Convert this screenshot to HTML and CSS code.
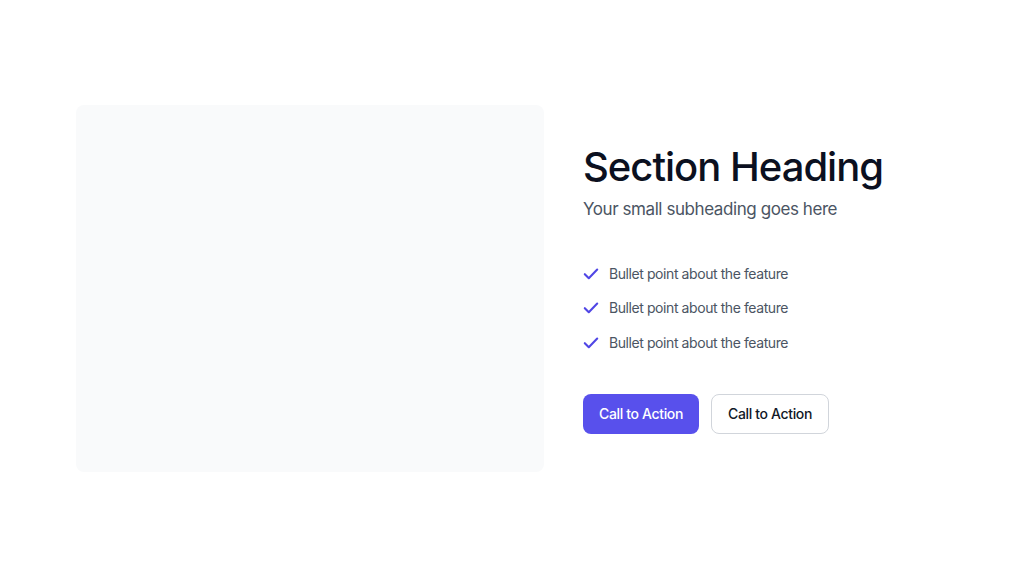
FILE: index.html
```html
<!DOCTYPE html>
<html lang="en">
<head>
<meta charset="utf-8">
<title>Section</title>
<link rel="stylesheet" href="styles.css">
</head>
<body>
<section class="section">
  <div class="media"></div>
  <div class="content">
    <h1 class="heading">Section Heading</h1>
    <p class="subheading">Your small subheading goes here</p>
    <ul class="bullets">
      <li class="bullet"><svg class="check" viewBox="0 0 16 16" fill="none"><path d="M1.8 8.2l4 4 8.4-8.6" stroke="currentColor" stroke-width="2.1" stroke-linecap="round" stroke-linejoin="round"/></svg><span>Bullet point about the feature</span></li>
      <li class="bullet"><svg class="check" viewBox="0 0 16 16" fill="none"><path d="M1.8 8.2l4 4 8.4-8.6" stroke="currentColor" stroke-width="2.1" stroke-linecap="round" stroke-linejoin="round"/></svg><span>Bullet point about the feature</span></li>
      <li class="bullet"><svg class="check" viewBox="0 0 16 16" fill="none"><path d="M1.8 8.2l4 4 8.4-8.6" stroke="currentColor" stroke-width="2.1" stroke-linecap="round" stroke-linejoin="round"/></svg><span>Bullet point about the feature</span></li>
    </ul>
    <div class="actions">
      <a class="btn btn-primary" href="#">Call to Action</a>
      <a class="btn btn-secondary" href="#">Call to Action</a>
    </div>
  </div>
</section>
</body>
</html>
```
FILE: styles.css
```css
* { box-sizing: border-box; }
html, body { margin: 0; padding: 0; background: #ffffff; }
body { font-family: Inter, "Noto Sans", sans-serif; color: #111827; }

.section {
  display: flex;
  align-items: center;
  gap: 39px;
  height: 576px;
  padding-left: 76px;
}

.media {
  flex: none;
  width: 468px;
  height: 367px;
  background: #f9fafb;
  border-radius: 8px;
}

.content {
  display: flex;
  flex-direction: column;
}

.heading {
  margin: 0;
  font-size: 40px;
  line-height: 48px;
  font-weight: 500;
  color: #0b1020;
  letter-spacing: -0.025em;
}

.subheading {
  margin: 4px 0 0;
  font-size: 17px;
  line-height: 28px;
  color: #4b5563;
  letter-spacing: -0.025em;
}

.bullets {
  list-style: none;
  margin: 41px 0 0;
  padding: 0;
  display: flex;
  flex-direction: column;
  gap: 14.5px;
}

.bullet {
  display: flex;
  align-items: center;
  gap: 10px;
  font-size: 14px;
  line-height: 20px;
  color: #4b5563;
  letter-spacing: -0.03em;
}

.check {
  width: 16px;
  height: 16px;
  color: #5046e5;
  flex: none;
}

.actions {
  display: flex;
  gap: 12px;
  margin-top: 41px;
}

.btn {
  display: inline-flex;
  align-items: center;
  justify-content: center;
  height: 40px;
  padding: 0 16px;
  border-radius: 8px;
  font-size: 14px;
  line-height: 20px;
  font-weight: 500;
  letter-spacing: -0.025em;
  text-decoration: none;
}

.btn-primary {
  background: #5850ec;
  color: #ffffff;
}

.btn-secondary {
  background: #ffffff;
  color: #111827;
  border: 1px solid #d1d5db;
}
```
